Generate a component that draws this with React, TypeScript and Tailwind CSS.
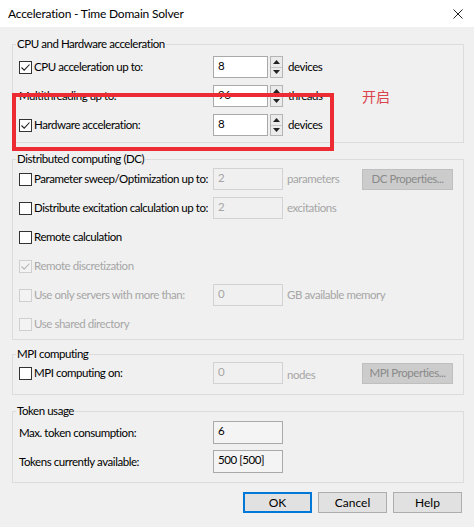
import React from "react";

const FONT = "font-['Lato','Liberation_Sans',sans-serif]";

function Check({ checked = false, disabled = false }: { checked?: boolean; disabled?: boolean }) {
  return (
    <span
      className={`flex h-[13px] w-[13px] shrink-0 items-center justify-center border ${
        disabled ? "border-[#cfcfcf] bg-[#f3f3f3]" : "border-[#333] bg-white"
      }`}
    >
      {checked && (
        <svg width="11" height="11" viewBox="0 0 11 11">
          <path
            d="M1.5 5.5 L4.2 8.2 L9.5 2.5"
            fill="none"
            stroke={disabled ? "#b4b4b4" : "#222"}
            strokeWidth="1.1"
          />
        </svg>
      )}
    </span>
  );
}

function Label({
  text,
  check,
  checked,
  disabled,
}: {
  text: string;
  check?: boolean;
  checked?: boolean;
  disabled?: boolean;
}) {
  return (
    <div className="flex w-[194px] shrink-0 items-center gap-[2px] whitespace-nowrap">
      {check && <Check checked={checked} disabled={disabled} />}
      <span className={disabled ? "text-[#a6a6a6]" : "text-black"}>{text}</span>
    </div>
  );
}

function Field({
  value,
  width,
  disabled,
  readOnly,
}: {
  value: string;
  width: string;
  disabled?: boolean;
  readOnly?: boolean;
}) {
  const tone = disabled
    ? "border-[#d2d2d2] bg-[#f0f0f0] text-[#a6a6a6]"
    : readOnly
    ? "border-[#a9a9a9] bg-[#f4f4f4] text-black"
    : "border-[#a9a9a9] bg-white text-black";
  return (
    <div className={`flex h-[22px] ${width} items-start border px-[4px] pt-[1px] leading-[16px] ${tone}`}>
      {value}
    </div>
  );
}

function Spinner() {
  return (
    <div className="ml-[2px] flex h-[22px] w-[13px] flex-col border border-[#b5b5b5] bg-[#ebebeb]">
      <div className="flex flex-1 items-center justify-center border-b border-[#c8c8c8]">
        <svg width="7" height="4" viewBox="0 0 7 4">
          <path d="M0 4 L3.5 0 L7 4 Z" fill="#222" />
        </svg>
      </div>
      <div className="flex flex-1 items-center justify-center">
        <svg width="7" height="4" viewBox="0 0 7 4">
          <path d="M0 0 L3.5 4 L7 0 Z" fill="#222" />
        </svg>
      </div>
    </div>
  );
}

function Group({
  title,
  className,
  children,
}: {
  title: string;
  className: string;
  children: React.ReactNode;
}) {
  return (
    <fieldset className={`border border-[#dcdcdc] pl-[6px] ${className}`}>
      <legend className="-ml-[3px] whitespace-nowrap px-[1px] leading-[16px]">{title}</legend>
      {children}
    </fieldset>
  );
}

function DisabledButton({ text }: { text: string }) {
  return (
    <div className="flex h-[21px] w-[91px] items-center justify-center whitespace-nowrap border border-[#bfbfbf] bg-[#cccccc] text-[#8a8a8a]">
      {text}
    </div>
  );
}

function Button({ text, primary }: { text: string; primary?: boolean }) {
  return (
    <div
      className={`flex h-[21px] w-[69px] items-center justify-center bg-[#e1e1e1] text-[12px] tracking-normal ${
        primary ? "border-2 border-[#0078d7]" : "border border-[#adadad]"
      }`}
    >
      {text}
    </div>
  );
}

export default function App() {
  return (
    <div
      className={`relative h-[527px] w-[474px] overflow-hidden bg-[#f0f0f0] text-[11.5px] tracking-[-0.45px] text-black ${FONT}`}
    >
      {/* title bar */}
      <div className="flex h-[27px] items-center justify-between bg-white pl-[8px] pr-[11px]">
        <span className="whitespace-nowrap text-[12px] tracking-[-0.2px]">Acceleration - Time Domain Solver</span>
        <svg width="10" height="10" viewBox="0 0 10 10">
          <path d="M0.5 0.5 L9.5 9.5 M9.5 0.5 L0.5 9.5" stroke="#222" strokeWidth="1" />
        </svg>
      </div>

      <div className="flex flex-col pl-[12px] pr-[10px]">
        <Group title="CPU and Hardware acceleration" className="mt-[9px] pb-[6px]">
          <div className="flex flex-col gap-[7px] pt-[4px]">
            <div className="flex h-[22px] items-center">
              <Label text="CPU acceleration up to:" check checked />
              <Field value="8" width="w-[55px]" />
              <Spinner />
              <span className="ml-[5px]">devices</span>
            </div>
            <div className="flex h-[22px] items-center">
              <Label text="Multithreading up to:" />
              <Field value="96" width="w-[55px]" />
              <Spinner />
              <span className="ml-[5px]">threads</span>
            </div>
            <div className="flex h-[22px] items-center">
              <Label text="Hardware acceleration:" check checked />
              <Field value="8" width="w-[55px]" />
              <Spinner />
              <span className="ml-[5px]">devices</span>
            </div>
          </div>
        </Group>

        <Group title="Distributed computing (DC)" className="mt-[8px] pb-[4px]">
          <div className="flex flex-col gap-[7px] pt-[1px]">
            <div className="flex h-[22px] items-center">
              <Label text="Parameter sweep/Optimization up to:" check />
              <Field value="2" width="w-[70px]" disabled />
              <span className="ml-[4px] w-[75px] text-[#a6a6a6]">parameters</span>
              <DisabledButton text="DC Properties..." />
            </div>
            <div className="flex h-[22px] items-center">
              <Label text="Distribute excitation calculation up to:" check />
              <Field value="2" width="w-[70px]" disabled />
              <span className="ml-[4px] text-[#a6a6a6]">excitations</span>
            </div>
            <div className="flex h-[22px] items-center">
              <Label text="Remote calculation" check />
            </div>
            <div className="flex h-[22px] items-center">
              <Label text="Remote discretization" check checked disabled />
            </div>
            <div className="flex h-[22px] items-center">
              <Label text="Use only servers with more than:" check disabled />
              <Field value="0" width="w-[70px]" disabled />
              <span className="ml-[4px] text-[#a6a6a6]">GB available memory</span>
            </div>
            <div className="flex h-[22px] items-center">
              <Label text="Use shared directory" check disabled />
            </div>
          </div>
        </Group>

        <Group title="MPI computing" className="mt-[6px] pb-[10px]">
          <div className="flex h-[22px] items-center">
            <Label text="MPI computing on:" check />
            <Field value="0" width="w-[70px]" disabled />
            <span className="ml-[4px] w-[75px] pt-[3px] text-[#a6a6a6]">nodes</span>
            <DisabledButton text="MPI Properties..." />
          </div>
        </Group>

        <Group title="Token usage" className="mt-[8px] pb-[9px]">
          <div className="flex flex-col gap-[6px] pt-[2px]">
            <div className="flex h-[23px] items-center">
              <Label text="Max. token consumption:" />
              <Field value="6" width="w-[70px] h-[23px]" readOnly />
            </div>
            <div className="flex h-[23px] items-center">
              <Label text="Tokens currently available:" />
              <Field value="500 [500]" width="w-[70px] h-[23px]" readOnly />
            </div>
          </div>
        </Group>

        <div className="mt-[9px] flex justify-end gap-[6px] pr-[2px]">
          <Button text="OK" primary />
          <Button text="Cancel" />
          <Button text="Help" />
        </div>
      </div>

      {/* red annotation drawn over the dialog */}
      <div className="pointer-events-none absolute left-[12px] top-[93px] h-[58px] w-[322px] border-[4px] border-[#ec2b32]" />
      <span className="absolute left-[362px] top-[86px] font-['Noto_Sans_CJK_SC',sans-serif] text-[14px] tracking-normal text-[#d9434b]">
        开启
      </span>
    </div>
  );
}
